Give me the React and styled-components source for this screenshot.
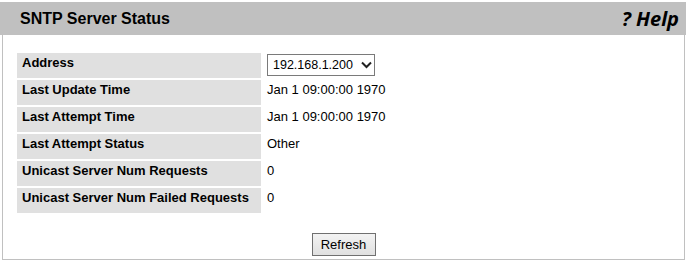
import React from 'react';
import styled, { createGlobalStyle } from 'styled-components';

const GlobalStyle = createGlobalStyle`
  body {
    margin: 0;
    background: #ffffff;
    font-family: "Liberation Sans", Arial, sans-serif;
  }
`;

const Page = styled.div`
  width: 686px;
  padding-top: 2px;
`;

const Header = styled.div`
  height: 33px;
  background-color: #c0c0c0;
  display: flex;
  align-items: center;
  justify-content: space-between;
  padding: 0 7px 0 20px;
`;

const Title = styled.h1`
  margin: 0;
  font-size: 16px;
  font-weight: bold;
  color: #000;
  font-family: "Liberation Sans", Arial, sans-serif;
`;

const HelpLink = styled.a`
  font-family: "Open Sans", sans-serif;
  font-style: italic;
  font-weight: bold;
  font-size: 20px;
  color: #000;
  text-decoration: none;
  cursor: pointer;
`;

const Body = styled.div`
  margin: 0 1px 0 2px;
  border: 1px solid #c0c0c0;
  border-top: none;
  padding: 18px 14px 3px;
  display: flex;
  flex-direction: column;
`;

const Grid = styled.div`
  display: grid;
  grid-template-columns: 244px 1fr;
  grid-auto-rows: 25px;
  gap: 2px;
`;

const Label = styled.div`
  background-color: #e0e0e0;
  font-weight: bold;
  font-size: 13px;
  color: #000;
  padding: 2px 0 0 5px;
  white-space: nowrap;
`;

const Value = styled.div`
  font-size: 13px;
  color: #000;
  padding: ${(p) => (p.$control ? '1px 0 0 4px' : '2px 0 0 4px')};
  white-space: nowrap;
`;

const SelectWrap = styled.div`
  position: relative;
  width: 108px;
  height: 22px;
`;

const Select = styled.select`
  appearance: none;
  width: 100%;
  height: 100%;
  border: 1px solid #7a7a7a;
  border-radius: 0;
  background: #fff;
  font-family: "Liberation Sans", Arial, sans-serif;
  font-size: 12.5px;
  color: #000;
  padding: 0 0 0 5px;
  margin: 0;
  outline: none;
`;

const Chevron = styled.svg`
  position: absolute;
  right: 3px;
  top: 7px;
  pointer-events: none;
`;

const Actions = styled.div`
  display: flex;
  justify-content: center;
  margin-top: 20px;
`;

const Button = styled.button`
  width: 64px;
  height: 23px;
  border: 1px solid #707070;
  background: linear-gradient(#f3f3f3, #e0e0e0);
  font-family: "Liberation Sans", Arial, sans-serif;
  font-size: 13px;
  color: #000;
  padding: 0;
  cursor: pointer;
`;

const rows = [
  ['Last Update Time', 'Jan 1 09:00:00 1970'],
  ['Last Attempt Time', 'Jan 1 09:00:00 1970'],
  ['Last Attempt Status', 'Other'],
  ['Unicast Server Num Requests', '0'],
  ['Unicast Server Num Failed Requests', '0'],
];

export default function App() {
  return (
    <Page>
      <GlobalStyle />
      <Header>
        <Title>SNTP Server Status</Title>
        <HelpLink>? Help</HelpLink>
      </Header>
      <Body>
        <Grid>
          <Label>Address</Label>
          <Value $control>
            <SelectWrap>
              <Select defaultValue="192.168.1.200">
                <option value="192.168.1.200">192.168.1.200</option>
              </Select>
              <Chevron width="11" height="8" viewBox="0 0 11 8">
                <path d="M1 1.5 L5.5 6 L10 1.5" fill="none" stroke="#222" strokeWidth="2" />
              </Chevron>
            </SelectWrap>
          </Value>
          {rows.map(([label, value]) => (
            <React.Fragment key={label}>
              <Label>{label}</Label>
              <Value>{value}</Value>
            </React.Fragment>
          ))}
        </Grid>
        <Actions>
          <Button type="button">Refresh</Button>
        </Actions>
      </Body>
    </Page>
  );
}
